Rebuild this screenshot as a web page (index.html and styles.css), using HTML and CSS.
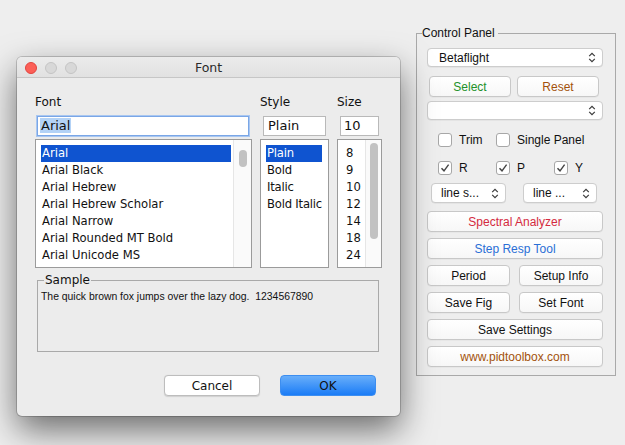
FILE: index.html
```html
<!DOCTYPE html>
<html>
<head>
<meta charset="utf-8">
<link rel="stylesheet" href="styles.css">
</head>
<body>
<div class="desktop">
  <fieldset class="panel">
    <legend class="panel-legend">Control Panel</legend>
    <div class="popup popup-main"><span>Betaflight</span><svg class="chev" width="8" height="11" viewBox="0 0 8 11"><path d="M1.2 4.2 L4 1.4 L6.8 4.2 M1.2 6.8 L4 9.6 L6.8 6.8" fill="none" stroke="#3a3a3a" stroke-width="1.2"/></svg></div>
    <div class="row row-sel">
      <button class="pbtn half82 green">Select</button>
      <button class="pbtn half82 brown">Reset</button>
    </div>
    <div class="popup popup-empty"><span></span><svg class="chev" width="8" height="11" viewBox="0 0 8 11"><path d="M1.2 4.2 L4 1.4 L6.8 4.2 M1.2 6.8 L4 9.6 L6.8 6.8" fill="none" stroke="#3a3a3a" stroke-width="1.2"/></svg></div>
    <div class="checks checks-a">
      <label class="chk w58"><span class="box"></span>Trim</label>
      <label class="chk"><span class="box"></span>Single Panel</label>
    </div>
    <div class="checks checks-b">
      <label class="chk w58"><span class="box"><svg width="12" height="12" viewBox="0 0 12 12"><path d="M2.5 6.2 L5 8.8 L9.6 2.6" fill="none" stroke="#444" stroke-width="1.4"/></svg></span>R</label>
      <label class="chk w58"><span class="box"><svg width="12" height="12" viewBox="0 0 12 12"><path d="M2.5 6.2 L5 8.8 L9.6 2.6" fill="none" stroke="#444" stroke-width="1.4"/></svg></span>P</label>
      <label class="chk"><span class="box"><svg width="12" height="12" viewBox="0 0 12 12"><path d="M2.5 6.2 L5 8.8 L9.6 2.6" fill="none" stroke="#444" stroke-width="1.4"/></svg></span>Y</label>
    </div>
    <div class="row row-line">
      <div class="popup popup-line1"><span>line s...</span><svg class="chev" width="8" height="11" viewBox="0 0 8 11"><path d="M1.2 4.2 L4 1.4 L6.8 4.2 M1.2 6.8 L4 9.6 L6.8 6.8" fill="none" stroke="#3a3a3a" stroke-width="1.2"/></svg></div>
      <div class="popup popup-line2"><span>line ...</span><svg class="chev" width="8" height="11" viewBox="0 0 8 11"><path d="M1.2 4.2 L4 1.4 L6.8 4.2 M1.2 6.8 L4 9.6 L6.8 6.8" fill="none" stroke="#3a3a3a" stroke-width="1.2"/></svg></div>
    </div>
    <button class="pbtn full red first">Spectral Analyzer</button>
    <button class="pbtn full blue">Step Resp Tool</button>
    <div class="row row-pair">
      <button class="pbtn w83">Period</button>
      <button class="pbtn w84">Setup Info</button>
    </div>
    <div class="row row-pair">
      <button class="pbtn w83">Save Fig</button>
      <button class="pbtn w84">Set Font</button>
    </div>
    <button class="pbtn full">Save Settings</button>
    <button class="pbtn full brown">www.pidtoolbox.com</button>
  </fieldset>

  <div class="dialog">
    <div class="titlebar">
      <div class="lights">
        <span class="light red-l"></span>
        <span class="light gray-l"></span>
        <span class="light gray-l"></span>
      </div>
      <div class="title">Font</div>
    </div>
    <div class="dbody">
      <div class="cols">
        <div class="col col-font">
          <div class="lbl">Font</div>
          <div class="field focus"><span class="hl">Arial</span></div>
          <div class="list">
            <div class="items items-font">
              <div class="item sel">Arial</div>
              <div class="item">Arial Black</div>
              <div class="item">Arial Hebrew</div>
              <div class="item">Arial Hebrew Scholar</div>
              <div class="item">Arial Narrow</div>
              <div class="item">Arial Rounded MT Bold</div>
              <div class="item">Arial Unicode MS</div>
            </div>
            <div class="track track-font"><div class="thumb thumb-font"></div></div>
          </div>
        </div>
        <div class="col col-style">
          <div class="lbl">Style</div>
          <div class="field field-style">Plain</div>
          <div class="list">
            <div class="items items-style">
              <div class="item sel">Plain</div>
              <div class="item">Bold</div>
              <div class="item">Italic</div>
              <div class="item">Bold Italic</div>
            </div>
          </div>
        </div>
        <div class="col col-size">
          <div class="lbl">Size</div>
          <div class="field field-size">10</div>
          <div class="list">
            <div class="items items-size">
              <div class="item">8</div>
              <div class="item">9</div>
              <div class="item">10</div>
              <div class="item">12</div>
              <div class="item">14</div>
              <div class="item">18</div>
              <div class="item">24</div>
            </div>
            <div class="track track-size"><div class="thumb thumb-size"></div></div>
          </div>
        </div>
      </div>
      <fieldset class="sample">
        <legend class="sample-legend">Sample</legend>
        <div class="sample-text">The quick brown fox jumps over the lazy dog.&nbsp; 1234567890</div>
      </fieldset>
      <div class="actions">
        <button class="dbtn cancel">Cancel</button>
        <button class="dbtn ok">OK</button>
      </div>
    </div>
  </div>
</div>
</body>
</html>
```

FILE: styles.css
```css
* { box-sizing: border-box; }
html, body { margin: 0; padding: 0; }
body {
  width: 625px;
  height: 445px;
  overflow: hidden;
  background: #eeeeee;
  font-family: "DejaVu Sans", sans-serif;
  color: #111;
}
.desktop {
  position: relative;
  width: 625px;
  height: 445px;
  display: flex;
  justify-content: flex-end;
  align-items: flex-start;
  padding: 26px 9px 0 0;
}

/* ---------- Control panel ---------- */
.panel {
  margin: 0;
  width: 200px;
  height: 350px;
  border: 1px solid #a9a9a9;
  padding: 7px 12px 0 10px;
  font-family: "Liberation Sans", Arial, sans-serif;
  font-size: 12px;
  display: flex;
  flex-direction: column;
  align-items: stretch;
}
.panel-legend {
  font-size: 12px;
  line-height: 14px;
  padding: 0 3px 0 0;
  margin-left: -5px;
  color: #111;
}
.popup {
  height: 19px;
  background: #fff;
  border: 1px solid #cdcdcd;
  border-radius: 4px;
  display: flex;
  align-items: center;
  justify-content: space-between;
  padding: 0 6px 0 11px;
  color: #111;
  box-shadow: 0 0.5px 0.5px rgba(0,0,0,0.08);
}
.popup-main { margin-top: 1px; }
.popup-empty { margin-top: 4px; }
.chev { display: block; }
.row { display: flex; }
.row-sel { margin-top: 9px; padding-left: 2px; gap: 6px; }
.half82 { width: 82px; }
.checks { display: flex; padding-left: 11px; height: 14px; align-items: center; }
.checks-a { margin-top: 13px; }
.checks-b { margin-top: 14px; }
.chk { display: flex; align-items: center; font-size: 12px; color: #111; }
.w58 { width: 58px; }
.box {
  width: 14px;
  height: 14px;
  border: 1px solid #a7a7a7;
  border-radius: 3px;
  background: #fff;
  margin-right: 7px;
  display: flex;
  align-items: center;
  justify-content: center;
}
.box svg { display: block; }
.row-line { margin-top: 8px; padding-left: 4px; }
.popup-line1 { width: 75px; height: 20px; padding-left: 9px; }
.popup-line2 { width: 74px; height: 20px; margin-left: 17px; padding-left: 9px; }
.pbtn {
  font-family: "Liberation Sans", Arial, sans-serif;
  font-size: 12px;
  height: 21px;
  margin: 0;
  padding: 0;
  background: linear-gradient(#ffffff, #f7f7f7);
  border: 1px solid #c8c8c8;
  border-radius: 4px;
  color: #111;
  box-shadow: 0 0.5px 0.5px rgba(0,0,0,0.06);
}
.full { width: 176px; margin-top: 6px; }
.full.first { margin-top: 8px; }
.row-pair { margin-top: 6px; gap: 9px; }
.row-pair .pbtn { margin-top: 0; }
.w83 { width: 83px; }
.w84 { width: 84px; }
.green { color: #23912a; }
.brown { color: #a3520c; }
.red { color: #d42a40; }
.blue { color: #2a6fd6; }

/* ---------- Dialog ---------- */
.dialog {
  position: absolute;
  left: 17px;
  top: 57px;
  width: 383px;
  height: 359px;
  background: #ececec;
  border-radius: 5px;
  box-shadow: 0 0 0 1px rgba(0,0,0,0.18), 0 14px 34px rgba(0,0,0,0.55);
  overflow: hidden;
  display: flex;
  flex-direction: column;
}
.titlebar {
  height: 21px;
  background: linear-gradient(#ebebeb, #e1e1e1);
  border-bottom: 1px solid #c6c6c6;
  position: relative;
  display: flex;
  align-items: center;
  justify-content: center;
}
.lights {
  position: absolute;
  left: 8px;
  top: 5px;
  display: flex;
  gap: 8px;
}
.light {
  width: 12px;
  height: 12px;
  border-radius: 50%;
  display: block;
}
.red-l { background: #fc5f57; border: 1px solid #e0443e; }
.gray-l { background: #d8d8d8; border: 1px solid #c4c4c4; }
.title {
  font-size: 12.5px;
  color: #2a2a2a;
  line-height: 21px;
}
.dbody {
  padding: 16px 0 0 18px;
  display: flex;
  flex-direction: column;
}
.cols {
  display: grid;
  grid-template-columns: 217px 69px 45px;
  column-gap: 8px;
}
.col { display: flex; flex-direction: column; }
.lbl {
  font-size: 12px;
  line-height: 16px;
  height: 16px;
  color: #111;
}
.field {
  margin-top: 6px;
  height: 20px;
  background: #fff;
  border: 1px solid #b9b9b9;
  font-size: 13px;
  line-height: 18px;
  padding-left: 2px;
  color: #111;
}
.field.focus {
  margin-left: 2px;
  width: 212px;
  border: 1px solid #7aa6e6;
  box-shadow: 0 0 0 1px #a9c7f1;
}
.hl { background: #b3d2f6; padding: 0 1px; }
.field-style { margin-left: 3px; width: 63px; padding-left: 4px; }
.field-size { margin-left: 3px; width: 39px; padding-left: 3px; }
.list {
  margin-top: 3px;
  height: 129px;
  background: #fff;
  border: 1px solid #9b9b9b;
  display: flex;
  overflow: hidden;
}
.items {
  flex: 1;
  padding-top: 5px;
  padding-left: 5px;
  min-width: 0;
}
.items-style { padding-right: 6px; }
.items-font { padding-right: 2px; }
.items-size { padding-left: 7px; }
.item {
  font-size: 11.6px;
  line-height: 17px;
  height: 17px;
  padding-left: 1px;
  white-space: nowrap;
  color: #111;
}
.items-style .item { letter-spacing: -0.2px; }
.item.sel { background: #0f54d0; color: #fff; }
.track {
  background: #fafafa;
  border-left: 1px solid #e6e6e6;
  display: flex;
  justify-content: center;
}
.track-font { width: 18px; padding-top: 10px; }
.track-size { width: 16px; padding-top: 3px; }
.thumb {
  width: 8px;
  border-radius: 4px;
  background: #c2c2c2;
}
.thumb-font { height: 17px; }
.thumb-size { height: 96px; }

.sample {
  margin: 5px 0 0 2px;
  width: 342px;
  height: 79px;
  border: 1px solid #a9a9a9;
  padding: 3px 3px 0 3px;
}
.sample-legend {
  font-size: 12px;
  line-height: 15px;
  padding: 0 1px;
  margin-left: 3px;
  color: #111;
}
.sample-text {
  font-family: "Liberation Sans", Arial, sans-serif;
  font-size: 10.4px;
  color: #111;
  white-space: nowrap;
}
.actions {
  display: flex;
  justify-content: flex-end;
  gap: 20px;
  padding-right: 24px;
  margin-top: 23px;
}
.dbtn {
  width: 96px;
  height: 21px;
  margin: 0;
  padding: 0;
  font-family: "DejaVu Sans", sans-serif;
  font-size: 12px;
  color: #111;
  border-radius: 4px;
}
.cancel {
  background: #fff;
  border: 1px solid #bdbdbd;
  box-shadow: 0 0.5px 1px rgba(0,0,0,0.12);
}
.ok {
  background: linear-gradient(#68aefa, #1b7cf6);
  border: 1px solid #3d8ef0;
  color: #111;
}
```
